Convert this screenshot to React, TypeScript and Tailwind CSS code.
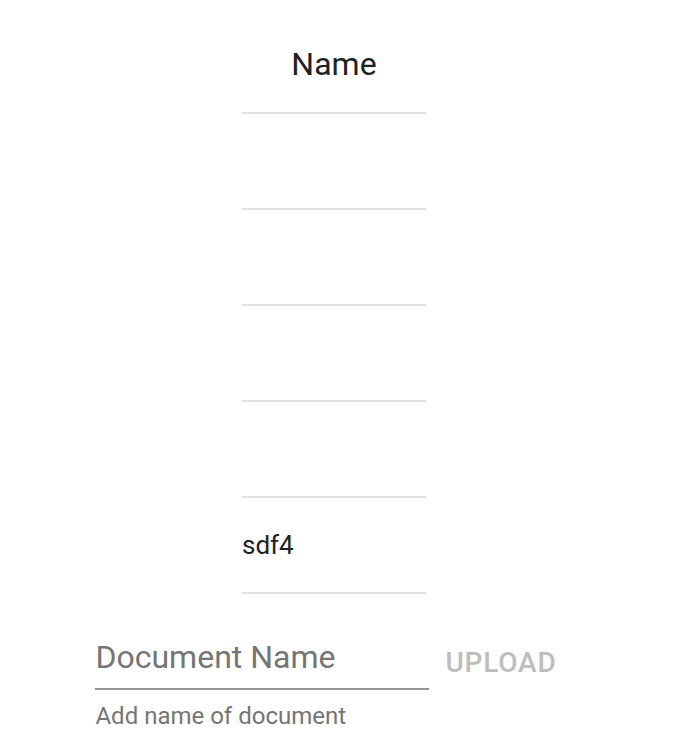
import React from "react";

const rows = ["", "", "", "", "sdf4"];

export default function App() {
  return (
    <div
      className="w-[668px] bg-white flex flex-col items-center"
      style={{ fontFamily: "Roboto, 'Liberation Sans', sans-serif" }}
    >
      {/* documents table */}
      <div className="w-[184px] flex flex-col">
        <div className="pt-[40px] pb-[24px] border-b-2 border-[#e0e0e0] text-center text-[32px] leading-[48px] font-normal text-[#212121]">
          Name
        </div>
        {rows.map((r, i) => (
          <div
            key={i}
            className="h-[96px] box-border border-b-2 border-[#e0e0e0] flex items-center text-[26px] leading-[40px] text-[#212121]"
          >
            {r}
          </div>
        ))}
      </div>

      {/* upload form */}
      <div className="flex items-center">
        <div className="w-[334px] flex flex-col">
          <div className="relative mt-[32px] h-[64px] border-b-2 border-[#949494]">
            <span className="absolute left-0 top-[8px] text-[32px] leading-[46px] text-[#757575]">
              Document Name
            </span>
          </div>
          <div className="mt-[6px] text-[24px] leading-[40px] text-[#757575]">
            Add name of document
          </div>
        </div>
        <button
          disabled
          className="px-[16px] pt-[9px] pb-[15px] text-[28px] leading-[49px] font-medium uppercase tracking-[0.8px] text-[#bdbdbd]"
        >
          Upload
        </button>
      </div>
    </div>
  );
}
